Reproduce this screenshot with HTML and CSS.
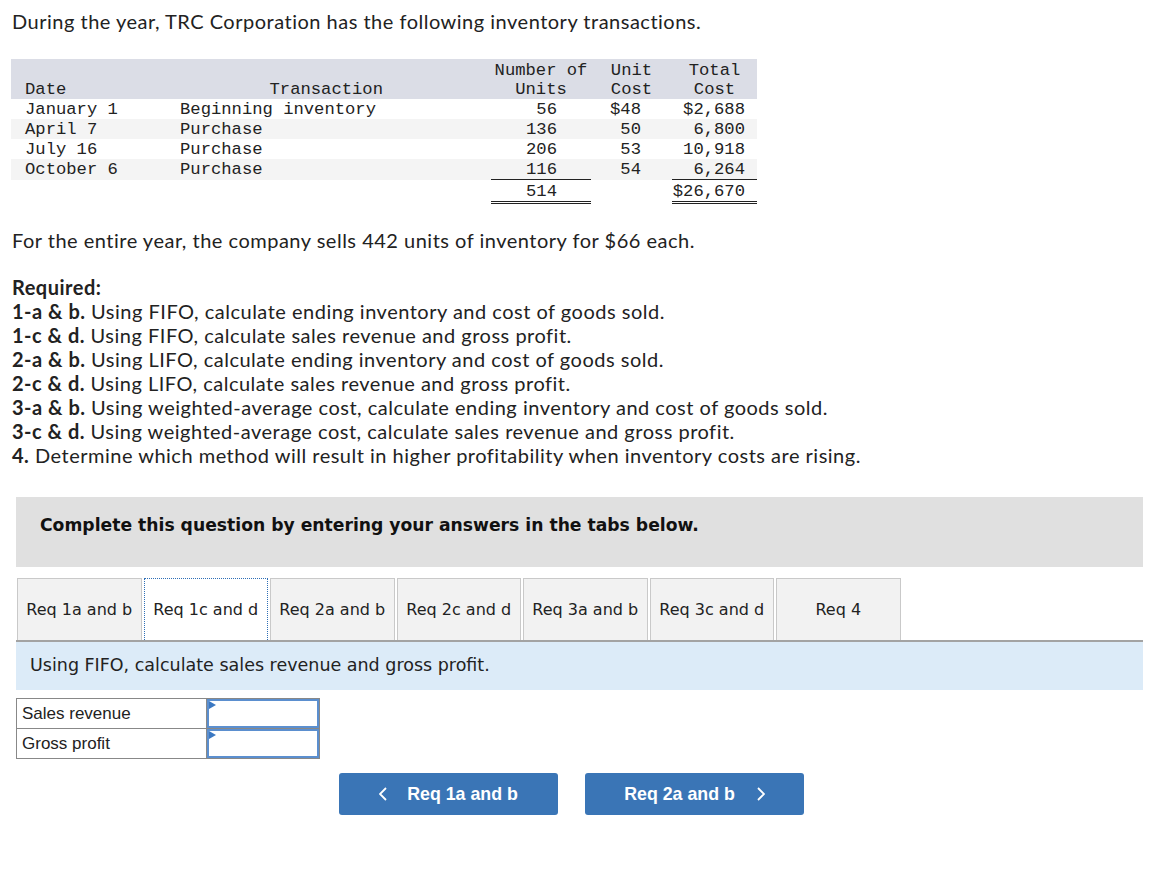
FILE: index.html
```html
<!DOCTYPE html>
<html>
<head>
<meta charset="utf-8">
<link rel="stylesheet" href="styles.css">
</head>
<body>
<div class="page">
  <p class="intro">During the year, TRC Corporation has the following inventory transactions.</p>

  <table class="inv">
    <colgroup>
      <col class="c-date"><col class="c-trans"><col class="c-space"><col class="c-units"><col class="c-unit"><col class="c-total">
    </colgroup>
    <thead>
      <tr>
        <th class="l">Date</th>
        <th class="r">Transaction</th>
        <th></th>
        <th class="c">Number of<br>Units</th>
        <th class="c">Unit<br>Cost</th>
        <th class="c">Total<br>Cost</th>
      </tr>
    </thead>
    <tbody>
      <tr><td>January 1</td><td>Beginning inventory</td><td></td><td class="n1">56</td><td class="n2">$48</td><td class="n3">$2,688</td></tr>
      <tr class="alt"><td>April 7</td><td>Purchase</td><td></td><td class="n1">136</td><td class="n2">50</td><td class="n3">6,800</td></tr>
      <tr><td>July 16</td><td>Purchase</td><td></td><td class="n1">206</td><td class="n2">53</td><td class="n3">10,918</td></tr>
      <tr class="alt"><td>October 6</td><td>Purchase</td><td></td><td class="n1 ul">116</td><td class="n2">54</td><td class="n3 ul">6,264</td></tr>
      <tr class="tot"><td></td><td></td><td></td><td class="n1 dul">514</td><td></td><td class="n3 dul">$26,670</td></tr>
    </tbody>
  </table>

  <p class="sells">For the entire year, the company sells 442 units of inventory for $66 each.</p>

  <div class="req">
    <p><b>Required:</b></p>
    <p><b>1-a &amp; b.</b> Using FIFO, calculate ending inventory and cost of goods sold.</p>
    <p><b>1-c &amp; d.</b> Using FIFO, calculate sales revenue and gross profit.</p>
    <p><b>2-a &amp; b.</b> Using LIFO, calculate ending inventory and cost of goods sold.</p>
    <p><b>2-c &amp; d.</b> Using LIFO, calculate sales revenue and gross profit.</p>
    <p><b>3-a &amp; b.</b> Using weighted-average cost, calculate ending inventory and cost of goods sold.</p>
    <p><b>3-c &amp; d.</b> Using weighted-average cost, calculate sales revenue and gross profit.</p>
    <p><b>4.</b> Determine which method will result in higher profitability when inventory costs are rising.</p>
  </div>

  <div class="panel">Complete this question by entering your answers in the tabs below.</div>

  <div class="tabs">
    <div class="tab">Req 1a and b</div>
    <div class="tab active">Req 1c and d</div>
    <div class="tab">Req 2a and b</div>
    <div class="tab">Req 2c and d</div>
    <div class="tab">Req 3a and b</div>
    <div class="tab">Req 3c and d</div>
    <div class="tab">Req 4</div>
  </div>

  <div class="prompt">Using FIFO, calculate sales revenue and gross profit.</div>

  <table class="ans">
    <tr><td class="lab">Sales revenue</td><td class="inp"><span class="box"><span class="tri"></span></span></td></tr>
    <tr><td class="lab">Gross profit</td><td class="inp"><span class="box"><span class="tri"></span></span></td></tr>
  </table>

  <div class="nav">
    <button class="btn"><svg class="chev l" width="8" height="14" viewBox="0 0 8 14"><path d="M7 1 L1 7 L7 13" fill="none" stroke="#fff" stroke-width="1.8"/></svg><span>Req 1a and b</span></button>
    <button class="btn"><span>Req 2a and b</span><svg class="chev r" width="8" height="14" viewBox="0 0 8 14"><path d="M1 1 L7 7 L1 13" fill="none" stroke="#fff" stroke-width="1.8"/></svg></button>
  </div>
</div>
</body>
</html>
```

FILE: styles.css
```css
* { box-sizing: border-box; }
body { margin: 0; background: #fff; color: #222; font-family: Lato, "Liberation Sans", sans-serif; }
.page { width: 1161px; }
p { margin: 0; }

.intro { font-size: 20px; line-height: 24px; padding: 9px 0 0 12px; color: #222; letter-spacing: 0.5px; }

.inv { margin: 26px 0 0 11px; border-collapse: collapse; font-family: "Liberation Mono", monospace; font-size: 17.2px; color: #222; table-layout: fixed; width: 746px; }
.c-date { width: 159px; }
.c-trans { width: 223px; }
.c-space { width: 98px; }
.c-units { width: 100px; }
.c-unit { width: 81px; }
.c-total { width: 85px; }
.inv th { font-weight: normal; line-height: 19px; padding: 0; background: #dbdde6; vertical-align: bottom; height: 40px; }
.inv th.l { text-align: left; padding-left: 14px; }
.inv th.r { text-align: right; padding-right: 10px; }
.inv th.c { text-align: center; }
.inv td { line-height: 18px; height: 20px; padding: 2px 0 0 0; white-space: nowrap; }
.inv td:first-child { padding-left: 14px; }
.inv td:nth-child(2) { padding-left: 10px; }
.inv tr.alt td { background: #f4f4f4; }
.inv td.n1 { text-align: right; padding-right: 34px; }
.inv td.n2 { text-align: right; padding-right: 31px; }
.inv td.n3 { text-align: right; padding-right: 12px; }
.inv td.ul { border-bottom: 1px solid #222; }
.inv td.dul { border-bottom: 3px double #222; }
.inv tr.tot td { height: 23px; }

.sells { font-size: 20px; line-height: 24px; padding: 24px 0 0 12px; letter-spacing: 0.5px; }
.req { padding: 23px 0 0 12px; font-size: 20px; line-height: 24px; letter-spacing: 0.5px; }
.req b { font-weight: 700; }

.panel { margin: 30px 0 0 16px; width: 1127px; height: 70px; background: #e0e0e0; font-family: "DejaVu Sans", Verdana, sans-serif; font-weight: bold; font-size: 17.2px; color: #111; padding: 18px 0 0 24px; }

.tabs { margin: 11px 0 0 16px; width: 1127px; display: flex; gap: 2px; border-bottom: 2px solid #a3a3a3; padding-left: 1px; }
.tab { height: 62px; width: 124.5px; flex: none; padding: 0; white-space: nowrap; display: flex; align-items: center; justify-content: center; background: #f2f2f2; border: 1px solid #c9c9c9; border-bottom: none; font-family: "DejaVu Sans", Verdana, sans-serif; font-size: 16px; color: #222; }
.tab.active { background: #fff; border: 1px dotted #2f6fb6; border-bottom: none; }

.prompt { margin: 0 0 0 16px; width: 1127px; height: 48px; background: #dcebf8; font-family: "DejaVu Sans", Verdana, sans-serif; font-size: 17.5px; color: #222; padding: 13px 0 0 14px; }

.ans { margin: 8px 0 0 16px; border-collapse: collapse; border: 1px solid #888; font-family: "Liberation Sans", Arial, sans-serif; font-size: 17px; color: #222; }
.ans td { border: 1px solid #888; height: 30px; padding: 0; }
.ans td.lab { width: 190px; padding-left: 5px; }
.ans td.inp { width: 113px; padding: 0; }
.box { display: block; position: relative; height: 29px; border: 2px solid #5b8fcf; background: #fff; }
.tri { position: absolute; left: 0; top: 0; width: 0; height: 0; border-top: 4px solid transparent; border-bottom: 4px solid transparent; border-left: 7px solid #3b78c2; }

.nav { display: flex; gap: 27px; margin: 14px 0 0 339px; }
.btn { width: 219px; height: 42px; border: none; border-radius: 3px; background: #3a75b6; color: #fff; font-family: "Liberation Sans", Arial, sans-serif; font-weight: bold; font-size: 17.8px; display: flex; align-items: center; justify-content: center; padding: 0; }
.chev.l { margin-right: 20px; }
.chev.r { margin-left: 22px; }
```
